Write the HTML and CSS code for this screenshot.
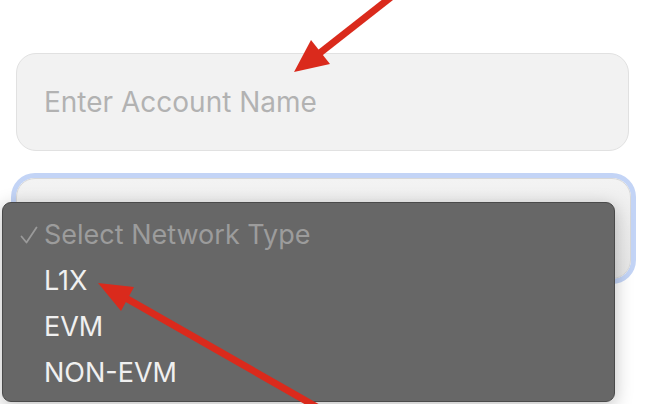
FILE: index.html
```html
<!DOCTYPE html>
<html>
<head>
<meta charset="utf-8">
<link rel="stylesheet" href="styles.css">
</head>
<body>
<div class="page">
  <div class="field">
    <span class="placeholder">Enter Account Name</span>
  </div>
  <div class="select-wrap">
    <div class="select"></div>
    <ul class="menu">
      <li class="item header"><svg class="check" width="18" height="18" viewBox="0 0 18 18"><path d="M1.5 10.5 L6.5 16.5 L16.5 1.5" fill="none" stroke="#9a9a9a" stroke-width="1.8" stroke-linecap="round" stroke-linejoin="round"/></svg>Select Network Type</li>
      <li class="item">L1X</li>
      <li class="item">EVM</li>
      <li class="item">NON-EVM</li>
    </ul>
  </div>
  <svg class="arrows" width="648" height="404" viewBox="0 0 648 404">
    <line x1="395" y1="-6" x2="316" y2="56" stroke="#da2a1c" stroke-width="7"/>
    <polygon points="294,72 311,40 330,64" fill="#da2a1c"/>
    <line x1="322" y1="410" x2="124" y2="297" stroke="#da2a1c" stroke-width="7"/>
    <polygon points="98,283 134,287 121,311" fill="#da2a1c"/>
  </svg>
</div>
</body>
</html>
```

FILE: styles.css
```css
html, body {
  margin: 0;
  padding: 0;
  background: #ffffff;
  overflow: hidden;
}
.page {
  position: relative;
  width: 648px;
  height: 404px;
  padding: 53px 17px 0 16px;
  box-sizing: border-box;
  font-family: Inter, "Noto Sans", sans-serif;
}
.field {
  height: 98px;
  width: 613px;
  box-sizing: border-box;
  background: #f2f2f2;
  border: 1px solid #e1e1e1;
  border-radius: 20px;
  display: flex;
  align-items: center;
  padding-left: 27px;
}
.placeholder {
  font-size: 28px;
  color: #b2b2b2;
}
.select-wrap {
  position: relative;
  margin-top: 27px;
}
.select {
  width: 615px;
  height: 101px;
  box-sizing: border-box;
  border-radius: 19px;
  background: linear-gradient(#f3f3f3, #e6e6e6);
  border: 1px solid #d8d8d8;
  box-shadow: 0 0 0 5px #c3d4f6;
}
.menu {
  position: absolute;
  left: -14px;
  top: 24px;
  width: 613px;
  height: 200px;
  box-sizing: border-box;
  margin: 0;
  padding: 8px 0 0 0;
  list-style: none;
  background: #676767;
  border: 1px solid #4a4a4a;
  border-radius: 9px;
  box-shadow: 0 4px 18px rgba(0, 0, 0, 0.25);
}
.item {
  height: 46px;
  display: flex;
  align-items: center;
  padding-left: 41px;
  font-size: 27px;
  color: #f0f0f0;
}
.item.header {
  padding-left: 17px;
  color: #9c9c9c;
}
.check {
  margin-right: 6px;
  margin-top: 2px;
}
.arrows {
  position: absolute;
  left: 0;
  top: 0;
  pointer-events: none;
}
```
